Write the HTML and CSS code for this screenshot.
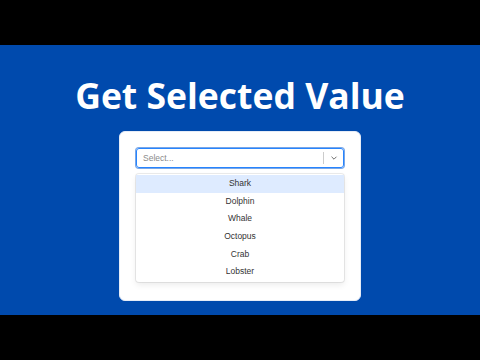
FILE: index.html
```html
<!DOCTYPE html>
<html>
<head>
<meta charset="utf-8">
<link rel="stylesheet" href="styles.css">
</head>
<body>
<div class="frame">
  <div class="bar"></div>
  <div class="stage">
    <h1 class="title">Get Selected Value</h1>
    <div class="card">
      <div class="select">
        <span class="placeholder">Select...</span>
        <span class="sep"></span>
        <span class="chev">
          <svg width="8" height="8" viewBox="0 0 20 20"><path d="M4.5 7.5 L10 13 L15.5 7.5" fill="none" stroke="#666" stroke-width="2.4" stroke-linecap="round" stroke-linejoin="round"/></svg>
        </span>
      </div>
      <ul class="menu">
        <li class="opt active">Shark</li>
        <li class="opt">Dolphin</li>
        <li class="opt">Whale</li>
        <li class="opt">Octopus</li>
        <li class="opt">Crab</li>
        <li class="opt">Lobster</li>
      </ul>
    </div>
  </div>
  <div class="bar"></div>
</div>
</body>
</html>
```
FILE: styles.css
```css
html, body { margin: 0; padding: 0; }
body { width: 480px; height: 360px; overflow: hidden; background: #000; font-family: "Open Sans", sans-serif; }
.frame { display: flex; flex-direction: column; height: 360px; }
.bar { height: 45px; background: #000; flex: none; }
.stage { flex: 1; background: #004aad; display: flex; flex-direction: column; align-items: center; }
.title { margin: 29px 0 0; color: #fff; font-family: "Open Sans", sans-serif; font-weight: 700; font-size: 35.5px; line-height: 42px; letter-spacing: 0; }
.card { margin-top: 15px; width: 208px; height: 152px; background: #fff; border-radius: 6px; border: 1px solid #e6ecf7; padding: 16px 16px 0 16px; box-sizing: content-box; }
.select { height: 18px; border: 1px solid #2684ff; box-shadow: 0 0 0 1px #7aa7e6; border-radius: 3px; display: flex; align-items: center; font-family: "Liberation Sans", sans-serif; }
.placeholder { flex: 1; font-size: 8.5px; color: #8a8a8a; padding-left: 6px; }
.sep { width: 1px; height: 12px; background: #ccc; }
.chev { width: 19px; display: flex; justify-content: center; align-items: center; }
.menu { list-style: none; margin: 6px 0 0; padding: 1px 0; background: #fff; border-radius: 3px; box-shadow: 0 0 0 1px rgba(0,0,0,0.08), 0 3px 6px rgba(0,0,0,0.08); }
.opt { height: 17.7px; line-height: 17.7px; text-align: center; font-family: "Liberation Sans", sans-serif; font-size: 8.5px; color: #333; }
.opt.active { background: #deebff; }
```
